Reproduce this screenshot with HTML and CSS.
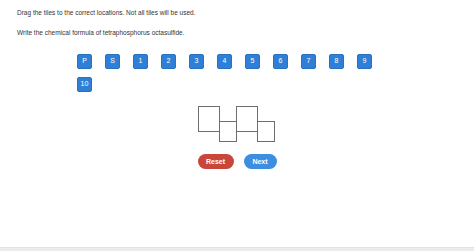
FILE: index.html
```html
<!DOCTYPE html>
<html lang="en">
<head>
    <meta charset="UTF-8">
    <title>Drag and Drop</title>
    <link rel="stylesheet" href="styles.css">
</head>
<body>
    <div class="question">
        <p class="prompt">Drag the tiles to the correct locations. Not all tiles will be used.</p>
        <p class="prompt">Write the chemical formula of tetraphosphorus octasulfide.</p>

        <div class="tile-bank">
            <div class="tile">P</div>
            <div class="tile">S</div>
            <div class="tile">1</div>
            <div class="tile">2</div>
            <div class="tile">3</div>
            <div class="tile">4</div>
            <div class="tile">5</div>
            <div class="tile">6</div>
            <div class="tile">7</div>
            <div class="tile">8</div>
            <div class="tile">9</div>
            <div class="tile">10</div>
        </div>

        <div class="formula">
            <div class="slot slot-symbol"></div>
            <div class="slot slot-sub"></div>
            <div class="slot slot-symbol"></div>
            <div class="slot slot-sub"></div>
        </div>

        <div class="actions">
            <button class="btn btn-reset">Reset</button>
            <button class="btn btn-next">Next</button>
        </div>
    </div>
    <div class="scroll-track"></div>
</body>
</html>
```

FILE: styles.css
```css
* {
    margin: 0;
    padding: 0;
    box-sizing: border-box;
}

html, body {
    height: 100%;
}

body {
    display: flex;
    flex-direction: column;
    font-family: "Liberation Sans", Arial, sans-serif;
    background-color: #fff;
    color: #333;
}

.question {
    flex: 1;
    padding: 9px 0 0 17px;
}

.prompt {
    font-size: 6.5px;
    line-height: 7px;
    margin-bottom: 13px;
}

.tile-bank {
    width: 320px;
    margin: 18px 0 0 60px;
    display: flex;
    flex-wrap: wrap;
    column-gap: 13px;
    row-gap: 8px;
}

.tile {
    width: 15px;
    height: 15px;
    background-color: #2e7fd5;
    border: 1px solid #2a72c0;
    border-radius: 2px;
    color: #fff;
    font-size: 7px;
    line-height: 12px;
    text-align: center;
}

.formula {
    display: flex;
    align-items: flex-start;
    justify-content: center;
    margin: 14px 0 0 -17px;
    padding-right: 3px;
}

.slot {
    border: 1.5px solid #6e6e6e;
    background-color: #fff;
}

.slot-symbol {
    width: 22px;
    height: 26px;
}

.slot-sub {
    width: 18px;
    height: 21px;
    margin-top: 15px;
    margin-left: -1px;
    margin-right: -1px;
}

.actions {
    display: flex;
    justify-content: center;
    gap: 10px;
    margin: 12px 0 0 -17px;
}

.btn {
    height: 15px;
    border: none;
    border-radius: 8px;
    color: #fff;
    font-family: "Liberation Sans", Arial, sans-serif;
    font-size: 7px;
    font-weight: bold;
}

.btn-reset {
    width: 36px;
    background-color: #c9463a;
}

.btn-next {
    width: 33px;
    background-color: #3d8ee0;
}

.scroll-track {
    height: 4px;
    background-color: #ececec;
    border-top: 1px solid #e2e2e2;
}
```
